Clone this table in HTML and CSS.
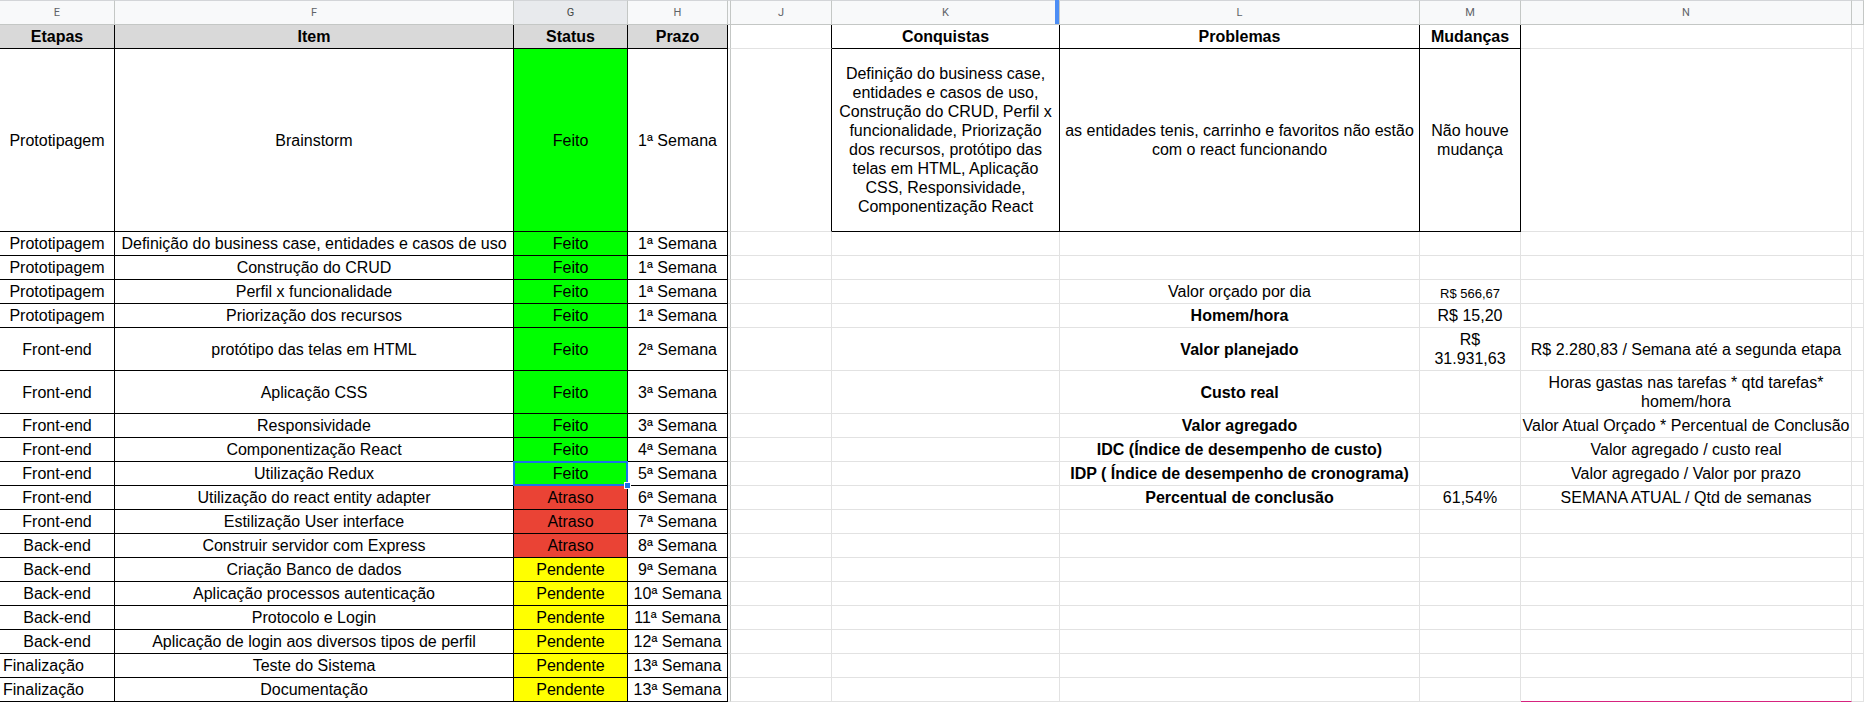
FILE: index.html
```html
<!DOCTYPE html>
<html lang="pt-BR">
<head>
<meta charset="utf-8">
<title>Planilha</title>
<link rel="stylesheet" href="styles.css">
</head>
<body>
<div class="sheet">
  <!-- column headers -->
  <div class="c h">E</div><div class="c h">F</div><div class="c h hs">G</div><div class="c h">H</div><div class="c h hi"></div><div class="c h">J</div><div class="c h hk">K</div><div class="c h">L</div><div class="c h">M</div><div class="c h">N</div><div class="c h"></div>

  <!-- row 1 -->
  <div class="c t th">Etapas</div><div class="c t th">Item</div><div class="c t th">Status</div><div class="c t th">Prazo</div><div class="c i"></div><div class="c rb"></div><div class="c b rb bb">Conquistas</div><div class="c b rb bb">Problemas</div><div class="c b rb bb">Mudanças</div><div class="c"></div><div class="c"></div>

  <!-- row 2 -->
  <div class="c t">Prototipagem</div><div class="c t">Brainstorm</div><div class="c t g">Feito</div><div class="c t">1ª Semana</div><div class="c i"></div><div class="c rb"></div>
  <div class="c rb bb">Definição do business case,<br>entidades e casos de uso,<br>Construção do CRUD, Perfil x<br>funcionalidade, Priorização<br>dos recursos, protótipo das<br>telas em HTML, Aplicação<br>CSS, Responsividade,<br>Componentização React</div>
  <div class="c rb bb">as entidades tenis, carrinho e favoritos não estão<br>com o react funcionando</div>
  <div class="c rb bb">Não houve<br>mudança</div><div class="c"></div><div class="c"></div>

  <!-- row 3 -->
  <div class="c t">Prototipagem</div><div class="c t">Definição do business case, entidades e casos de uso</div><div class="c t g">Feito</div><div class="c t">1ª Semana</div><div class="c i"></div><div class="c"></div><div class="c"></div><div class="c"></div><div class="c"></div><div class="c"></div><div class="c"></div>

  <!-- row 4 -->
  <div class="c t">Prototipagem</div><div class="c t">Construção do CRUD</div><div class="c t g">Feito</div><div class="c t">1ª Semana</div><div class="c i"></div><div class="c"></div><div class="c"></div><div class="c"></div><div class="c"></div><div class="c"></div><div class="c"></div>

  <!-- row 5 -->
  <div class="c t">Prototipagem</div><div class="c t">Perfil x funcionalidade</div><div class="c t g">Feito</div><div class="c t">1ª Semana</div><div class="c i"></div><div class="c"></div><div class="c"></div><div class="c">Valor orçado por dia</div><div class="c sm">R$ 566,67</div><div class="c"></div><div class="c"></div>

  <!-- row 6 -->
  <div class="c t">Prototipagem</div><div class="c t">Priorização dos recursos</div><div class="c t g">Feito</div><div class="c t">1ª Semana</div><div class="c i"></div><div class="c"></div><div class="c"></div><div class="c b">Homem/hora</div><div class="c">R$ 15,20</div><div class="c"></div><div class="c"></div>

  <!-- row 7 -->
  <div class="c t">Front-end</div><div class="c t">protótipo das telas em HTML</div><div class="c t g">Feito</div><div class="c t">2ª Semana</div><div class="c i"></div><div class="c"></div><div class="c"></div><div class="c b">Valor planejado</div><div class="c">R$<br>31.931,63</div><div class="c">R$ 2.280,83 / Semana até a segunda etapa</div><div class="c"></div>

  <!-- row 8 -->
  <div class="c t">Front-end</div><div class="c t">Aplicação CSS</div><div class="c t g">Feito</div><div class="c t">3ª Semana</div><div class="c i"></div><div class="c"></div><div class="c"></div><div class="c b">Custo real</div><div class="c"></div><div class="c">Horas gastas nas tarefas * qtd tarefas*<br>homem/hora</div><div class="c"></div>

  <!-- row 9 -->
  <div class="c t">Front-end</div><div class="c t">Responsividade</div><div class="c t g">Feito</div><div class="c t">3ª Semana</div><div class="c i"></div><div class="c"></div><div class="c"></div><div class="c b">Valor agregado</div><div class="c"></div><div class="c">Valor Atual Orçado * Percentual de Conclusão</div><div class="c"></div>

  <!-- row 10 -->
  <div class="c t">Front-end</div><div class="c t">Componentização React</div><div class="c t g">Feito</div><div class="c t">4ª Semana</div><div class="c i"></div><div class="c"></div><div class="c"></div><div class="c b">IDC (Índice de desempenho de custo)</div><div class="c"></div><div class="c">Valor agregado / custo real</div><div class="c"></div>

  <!-- row 11 -->
  <div class="c t">Front-end</div><div class="c t">Utilização Redux</div><div class="c t g sel">Feito</div><div class="c t">5ª Semana</div><div class="c i"></div><div class="c"></div><div class="c"></div><div class="c b">IDP ( Índice de desempenho de cronograma)</div><div class="c"></div><div class="c">Valor agregado / Valor por prazo</div><div class="c"></div>

  <!-- row 12 -->
  <div class="c t">Front-end</div><div class="c t">Utilização do react entity adapter</div><div class="c t r">Atraso</div><div class="c t">6ª Semana</div><div class="c i"></div><div class="c"></div><div class="c"></div><div class="c b">Percentual de conclusão</div><div class="c">61,54%</div><div class="c">SEMANA ATUAL / Qtd de semanas</div><div class="c"></div>

  <!-- row 13 -->
  <div class="c t">Front-end</div><div class="c t">Estilização User interface</div><div class="c t r">Atraso</div><div class="c t">7ª Semana</div><div class="c i"></div><div class="c"></div><div class="c"></div><div class="c"></div><div class="c"></div><div class="c"></div><div class="c"></div>

  <!-- row 14 -->
  <div class="c t">Back-end</div><div class="c t">Construir servidor com Express</div><div class="c t r">Atraso</div><div class="c t">8ª Semana</div><div class="c i"></div><div class="c"></div><div class="c"></div><div class="c"></div><div class="c"></div><div class="c"></div><div class="c"></div>

  <!-- row 15 -->
  <div class="c t">Back-end</div><div class="c t">Criação Banco de dados</div><div class="c t y">Pendente</div><div class="c t">9ª Semana</div><div class="c i"></div><div class="c"></div><div class="c"></div><div class="c"></div><div class="c"></div><div class="c"></div><div class="c"></div>

  <!-- row 16 -->
  <div class="c t">Back-end</div><div class="c t">Aplicação processos autenticação</div><div class="c t y">Pendente</div><div class="c t">10ª Semana</div><div class="c i"></div><div class="c"></div><div class="c"></div><div class="c"></div><div class="c"></div><div class="c"></div><div class="c"></div>

  <!-- row 17 -->
  <div class="c t">Back-end</div><div class="c t">Protocolo e Login</div><div class="c t y">Pendente</div><div class="c t">11ª Semana</div><div class="c i"></div><div class="c"></div><div class="c"></div><div class="c"></div><div class="c"></div><div class="c"></div><div class="c"></div>

  <!-- row 18 -->
  <div class="c t">Back-end</div><div class="c t">Aplicação de login aos diversos tipos de perfil</div><div class="c t y">Pendente</div><div class="c t">12ª Semana</div><div class="c i"></div><div class="c"></div><div class="c"></div><div class="c"></div><div class="c"></div><div class="c"></div><div class="c"></div>

  <!-- row 19 -->
  <div class="c t left">Finalização</div><div class="c t">Teste do Sistema</div><div class="c t y">Pendente</div><div class="c t">13ª Semana</div><div class="c i"></div><div class="c"></div><div class="c"></div><div class="c"></div><div class="c"></div><div class="c"></div><div class="c"></div>

  <!-- row 20 -->
  <div class="c t left">Finalização</div><div class="c t">Documentação</div><div class="c t y">Pendente</div><div class="c t">13ª Semana</div><div class="c i"></div><div class="c"></div><div class="c"></div><div class="c"></div><div class="c"></div><div class="c pk"></div><div class="c"></div>
</div>
</body>
</html>
```

FILE: styles.css
```css
html, body {
  margin: 0;
  padding: 0;
  background: #ffffff;
}

body {
  font-family: "Liberation Sans", Arial, sans-serif;
  font-size: 16px;
  color: #000000;
  overflow: hidden;
}

.sheet {
  display: grid;
  width: 1864px;
  height: 702px;
  grid-template-columns: 115px 399px 114px 100px 3px 101px 228px 360px 101px 331px 1fr;
  grid-template-rows: 25px 24px 183px 24px 24px 24px 24px 43px 43px repeat(12, 24px);
}

.c {
  box-sizing: border-box;
  position: relative;
  min-width: 0;
  display: flex;
  align-items: center;
  justify-content: center;
  text-align: center;
  white-space: nowrap;
  line-height: 19px;
  padding: 0 3px;
  border-right: 1px solid #e2e2e2;
  border-bottom: 1px solid #e2e2e2;
}

/* column letter headers */
.h {
  background: #f8f9fa;
  border-top: 1px solid #d3d5d8;
  border-right-color: #c4c7c5;
  border-bottom-color: #c4c7c5;
  font-family: Roboto, "Liberation Sans", sans-serif;
  font-size: 11px;
  color: #5f6368;
  padding: 0;
}

.hs {
  background: #e8eaed;
  color: #444746;
}

.hk::after {
  content: "";
  position: absolute;
  top: -1px;
  right: 0;
  width: 4px;
  bottom: 0;
  background: #4d8ef5;
}

/* hidden column marker */
.i {
  padding: 0;
  border-right-color: #c4c7c5;
}

/* bordered table */
.t {
  border-right-color: #000000;
  border-bottom-color: #000000;
}

.th {
  background: #d9d9d9;
  font-weight: bold;
}

.b {
  font-weight: bold;
}

.rb {
  border-right-color: #000000;
}

.bb {
  border-bottom-color: #000000;
}

.g { background: #00ff00; }
.r { background: #ea4335; }
.y { background: #ffff00; }

.left {
  justify-content: flex-start;
  text-align: left;
}

.sm {
  font-size: 13px;
  padding-top: 3px;
}

.pk {
  border-bottom-color: #d6237f;
}

/* active cell selection */
.sel {
  z-index: 2;
}

.sel::after {
  content: "";
  position: absolute;
  top: -1px;
  left: -1px;
  right: -1px;
  bottom: -1px;
  border: 2px solid #1a73e8;
}

.sel::before {
  content: "";
  position: absolute;
  right: -4px;
  bottom: -4px;
  width: 5px;
  height: 5px;
  background: #1a73e8;
  border: 1px solid #ffffff;
  z-index: 3;
}
```
